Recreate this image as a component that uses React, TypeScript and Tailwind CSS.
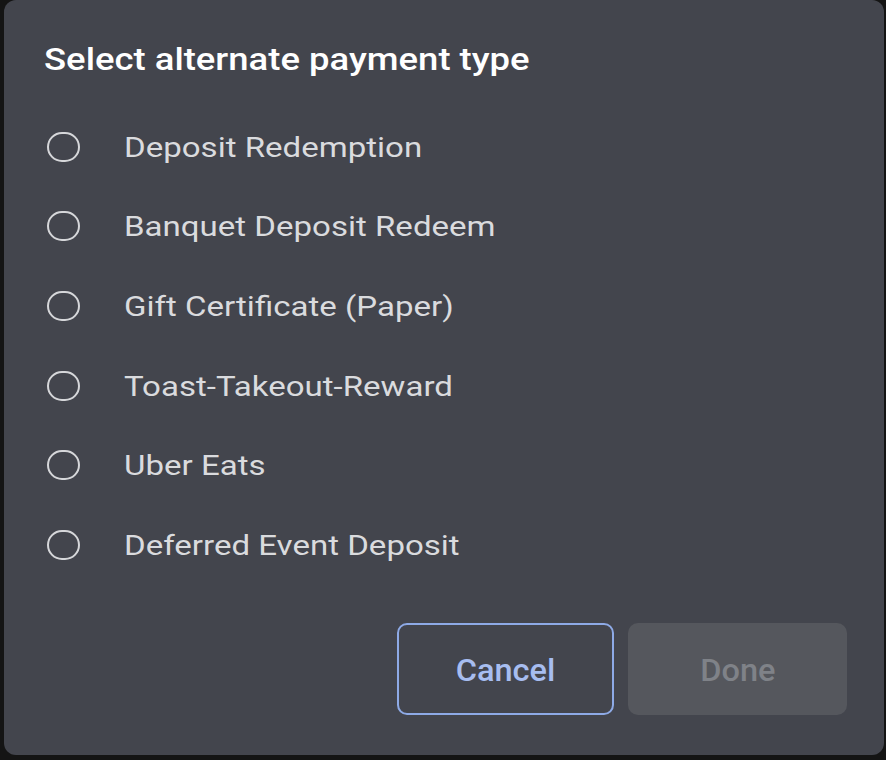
import React from "react";

const items = [
  "Deposit Redemption",
  "Banquet Deposit Redeem",
  "Gift Certificate (Paper)",
  "Toast-Takeout-Reward",
  "Uber Eats",
  "Deferred Event Deposit",
];

export default function App() {
  return (
    <div
      className="w-[886px] h-[760px] bg-[#141414] pl-[4px] pr-[2px] pb-[5px] flex"
      style={{ fontFamily: "Roboto, 'Noto Sans', sans-serif" }}
    >
      <div className="flex-1 flex flex-col bg-[#43454d] rounded-[12px]">
        <div className="pt-[41px] pl-[40px] h-[107px]">
          <h1 className="inline-block origin-left scale-x-[1.14] text-[32px] leading-[36px] font-medium text-white">
            Select alternate payment type
          </h1>
        </div>
        <div className="flex flex-col">
          {items.map((t) => (
            <div key={t} className="h-[79.6px] flex items-center">
              <div className="ml-[43px] w-[33px] h-[30px] rounded-full border-[2.5px] border-[#d6d7da]" />
              <span className="ml-[44px] mt-[2px] inline-block origin-left scale-x-[1.18] text-[28px] text-[#dadbde]">
                {t}
              </span>
            </div>
          ))}
        </div>
        <div className="flex justify-end gap-[14px] pr-[37px] mt-[38px]">
          <button className="w-[217px] h-[92px] pt-[5px] rounded-[10px] border-2 border-[#8eaae6] text-[#a7bdf0] text-[31px] font-medium">
            <span className="inline-block scale-x-[1.05]">Cancel</span>
          </button>
          <button className="w-[219px] h-[92px] pt-[5px] rounded-[10px] bg-[#55575d] text-[#7f8288] text-[31px] font-medium">
            <span className="inline-block scale-x-[1.05]">Done</span>
          </button>
        </div>
      </div>
    </div>
  );
}
